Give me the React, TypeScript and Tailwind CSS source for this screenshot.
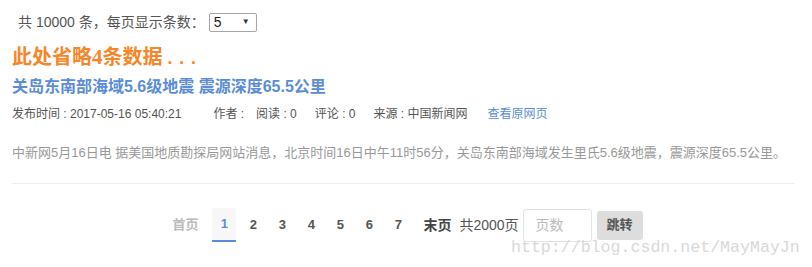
import React from "react";

const sans = "font-['Liberation_Sans','Noto_Sans_CJK_SC',sans-serif]";

const pages = ["1", "2", "3", "4", "5", "6", "7"];

export default function App() {
  return (
    <div
      className={`relative w-[812px] h-[267px] overflow-hidden bg-white ${sans} text-[#555]`}
    >
      <div className="flex flex-col pl-[12px] pr-[17px]">
        {/* per page */}
        <div className="mt-[12px] flex items-center h-[20px] pl-[6px] text-[14px] text-[#555]">
          <span>共 10000 条，每页显示条数：</span>
          <div className="ml-[4px] flex items-center justify-between w-[48px] h-[19px] border border-[#a6a6a6] rounded-[2px] pl-[4px] pr-[6px] text-[14px] text-[#222]">
            <span>5</span>
            <span className="text-[8px] text-[#333]">▼</span>
          </div>
        </div>

        <div className="mt-[12px] flex items-baseline h-[24px] leading-[24px] text-[20px] font-bold text-[#f7862a] font-['Noto_Sans_CJK_SC',serif]">
          <span>此处省略</span>
          <span className="font-['Liberation_Serif',serif] text-[21px]">4</span>
          <span>条数据</span>
          <span className="ml-[2px] font-['Liberation_Mono',monospace] text-[18px] tracking-[1px]">...</span>
        </div>

        {/* item */}
        <div className="mt-[7px] h-[24px] leading-[24px] text-[16px] font-bold text-[#5b8dd6]">
          关岛东南部海域5.6级地震 震源深度65.5公里
        </div>

        <div className="mt-[5px] flex items-center h-[20px] text-[12px] text-[#555]">
          <span className="mr-[32px]">发布时间 : 2017-05-16 05:40:21</span>
          <span className="mr-[12px]">作者 :</span>
          <span className="mr-[18px]">阅读 : 0</span>
          <span className="mr-[18px]">评论 : 0</span>
          <span className="mr-[20px]">来源 : 中国新闻网</span>
          <span className="text-[#5b8dd6]">查看原网页</span>
        </div>

        <p className="mt-[19px] h-[20px] leading-[20px] text-[13px] text-[#999]">
          中新网5月16日电 据美国地质勘探局网站消息，北京时间16日中午11时56分，关岛东南部海域发生里氏5.6级地震，震源深度65.5公里。
        </p>

        <div className="mt-[20px] h-px bg-[#eee]" />

        {/* pagination */}
        <div className="mt-[24px] pl-[8px] flex items-center justify-center text-[13px] font-bold">
          <span className="mr-[14px] text-[#bbb]">首页</span>
          <div className="flex items-center gap-[5px]">
            {pages.map((p) => (
              <span
                key={p}
                className={
                  p === "1"
                    ? "flex items-center justify-center w-[24px] h-[34px] bg-[#f7f7f7] border-b-2 border-[#5b8dd6] text-[#5b8dd6]"
                    : "flex items-center justify-center w-[24px] h-[34px] text-[#555]"
                }
              >
                {p}
              </span>
            ))}
          </div>
          <span className="ml-[13px] text-[14px] text-[#444]">末页</span>
          <span className="ml-[8px] text-[14px] font-normal text-[#555]">共2000页</span>
          <div className="ml-[4px] flex items-center w-[69px] h-[33px] border border-[#e3e3e3] rounded-[3px] pl-[12px] text-[14px] font-normal text-[#bbb]">
            页数
          </div>
          <button className="ml-[5px] w-[46px] h-[29px] bg-[#ddd] rounded-[3px] text-[#555] font-bold">
            跳转
          </button>
        </div>
      </div>

      <span className="absolute left-[511px] top-[238px] text-[16.6px] leading-[20px] text-[#d9d9d9] font-['Liberation_Mono',monospace] pointer-events-none">
        http://blog.csdn.net/MayMayJn
      </span>
    </div>
  );
}
